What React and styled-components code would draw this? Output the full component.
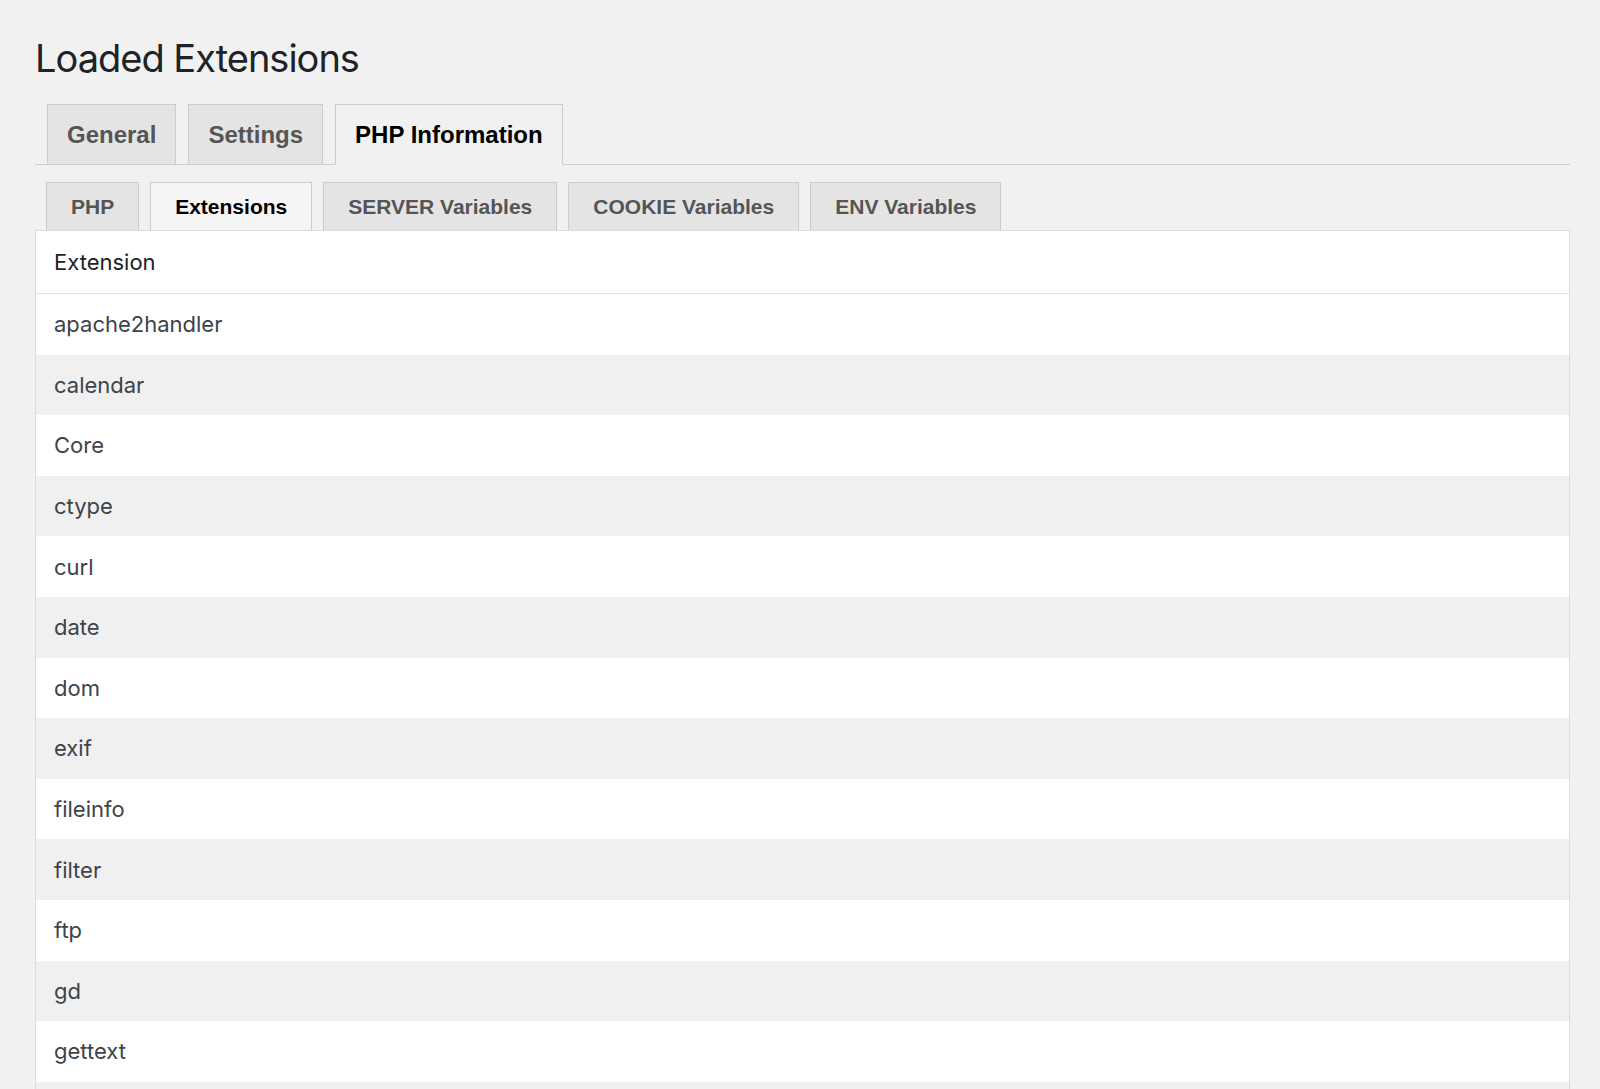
import React from "react";
import styled, { createGlobalStyle } from "styled-components";

const GlobalStyle = createGlobalStyle`
    html, body {
        margin: 0;
        padding: 0;
        background: #f1f1f1;
    }
    body {
        font-family: Inter, "Liberation Sans", Arial, sans-serif;
        color: #3c434a;
    }
`

const Page = styled.div`
    padding: 35px 30px 0 35px;
    min-height: 100vh;
    box-sizing: border-box;
`

const Title = styled.h1`
    margin: 0;
    font-family: Inter, "Liberation Sans", sans-serif;
    font-weight: 400;
    font-size: 38px;
    line-height: 46px;
    letter-spacing: -1px;
    color: #1d2327;
`

const TabBar = styled.nav`
    display: flex;
    align-items: flex-end;
    gap: 12px;
    margin-top: 23px;
    padding-left: 12px;
    border-bottom: 1px solid #cccccc;
`

const Tab = styled.a`
    display: flex;
    align-items: center;
    box-sizing: border-box;
    height: 61px;
    padding: 0 19px;
    margin-bottom: -1px;
    border: 1px solid #cccccc;
    border-bottom-color: ${p => (p.$active ? "#f1f1f1" : "#cccccc")};
    background: ${p => (p.$active ? "#f1f1f1" : "#e4e4e4")};
    color: ${p => (p.$active ? "#000000" : "#555555")};
    font-family: "Liberation Sans", Arial, sans-serif;
    font-weight: 700;
    font-size: 24px;
    text-decoration: none;
    cursor: pointer;
`

const SubTabBar = styled.div`
    display: flex;
    align-items: flex-end;
    gap: 11px;
    padding: 17px 0 0 11px;
`

const SubTab = styled.a`
    display: flex;
    align-items: center;
    box-sizing: border-box;
    height: 48px;
    padding: 0 24px;
    border: 1px solid #cccccc;
    border-bottom: none;
    background: ${p => (p.$active ? "#f5f5f5" : "#e4e4e4")};
    color: ${p => (p.$active ? "#000000" : "#555555")};
    font-family: "Liberation Sans", Arial, sans-serif;
    font-weight: 700;
    font-size: 21px;
    text-decoration: none;
    cursor: pointer;
`

const Table = styled.div`
    background: #ffffff;
    border: 1px solid #dddddd;
    border-bottom: none;
`

const HeadRow = styled.div`
    display: flex;
    align-items: center;
    height: 62px;
    padding: 0 18px;
    border-bottom: 1px solid #e1e1e1;
    font-size: 22px;
    color: #1d2327;
`

const Row = styled.div`
    display: flex;
    align-items: center;
    height: 60.6px;
    padding: 0 18px;
    font-size: 22px;
    color: #3c434a;
    background: ${p => (p.$odd ? "#f0f0f0" : "#ffffff")};
`

const mainTabs = ["General", "Settings", "PHP Information"]
const subTabs = ["PHP", "Extensions", "SERVER Variables", "COOKIE Variables", "ENV Variables"]
const extensions = [
    "apache2handler", "calendar", "Core", "ctype", "curl", "date", "dom",
    "exif", "fileinfo", "filter", "ftp", "gd", "gettext", "hash",
]

export default function App() {
    return (
        <>
            <GlobalStyle />
            <Page>
                <Title>Loaded Extensions</Title>
                <TabBar>
                    {mainTabs.map(t => (
                        <Tab key={t} $active={t === "PHP Information"}>{t}</Tab>
                    ))}
                </TabBar>
                <SubTabBar>
                    {subTabs.map(t => (
                        <SubTab key={t} $active={t === "Extensions"}>{t}</SubTab>
                    ))}
                </SubTabBar>
                <Table>
                    <HeadRow>Extension</HeadRow>
                    {extensions.map((e, i) => (
                        <Row key={e} $odd={i % 2 === 1}>{e}</Row>
                    ))}
                </Table>
            </Page>
        </>
    )
}
